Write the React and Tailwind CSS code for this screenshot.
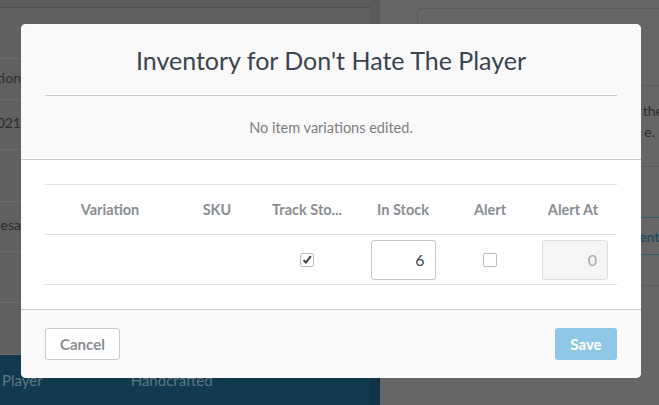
import { useState } from 'react';

const font = { fontFamily: 'Lato, "Open Sans", sans-serif' };

// columns of the inventory table
const cols = [
  { label: 'Variation', w: 'w-[130px]' },
  { label: 'SKU', w: 'w-[84px]' },
  { label: 'Track Sto...', w: 'w-[96px]' },
  { label: 'In Stock', w: 'w-[96px]' },
  { label: 'Alert', w: 'w-[78px]' },
  { label: 'Alert At', w: 'w-[88px]' },
];

const sideRows = [
  { text: 'Description', h: 'h-[41px]' },
  { text: 'SKU 80021', h: 'h-[50px]' },
  { text: '', h: 'h-[52px]' },
  { text: 'Mesa', h: 'h-[50px]' },
  { text: '', h: 'h-[51px]' },
  { text: '', h: 'h-[52px]' },
];

function Backdrop() {
  return (
    <div className="flex h-[405px] w-[659px] overflow-hidden">
      <div className="flex w-[370px] flex-col bg-[#606060]">
        <div className="h-[8px] border-b border-[#4e4e4e] bg-[#5c5c5c]" />
        <div className="h-[51px] border-b border-[#6a6a6a]" />
        {sideRows.map((r, i) => (
          <div key={i} className={`flex ${r.h} items-center border-b border-[#6a6a6a] pb-[4px]`}>
            <div className="flex w-[21px] justify-end overflow-hidden whitespace-nowrap text-[14px] text-[#2c2c2c]">{r.text}</div>
          </div>
        ))}
        <div className="flex flex-1 items-end gap-[88px] bg-[#113a4f] pb-[14px] pl-[2px] text-[15px] text-[#5e7582]">
          <span>Player</span>
          <span>Handcrafted</span>
        </div>
      </div>
      <div className="flex w-[10px] flex-col bg-[#5a5a5a]">
        <div className="flex-1" />
        <div className="h-[50px] bg-[#0f3447]" />
      </div>
      <div className="flex flex-1 flex-col bg-[#666666] pl-[37px]">
        <div className="mt-[8px] h-[38px] rounded-tl-[4px] border-l border-t border-[#5a5a5a]" />
        <div className="h-[40px] border-b border-[#5c5c5c]" />
        <div className="flex flex-col items-end pt-[14px] text-[14px] leading-[21px] text-[#2c2c2c]">
          <span className="-mr-[4px]">the</span>
          <span className="mr-[4px]">e.</span>
        </div>
        <div className="mt-[24px] border-t border-[#5c5c5c]" />
        <div className="mt-[50px] border-t border-[#2c5d78]" />
        <div className="flex h-[37px] items-center justify-end border-b border-[#2c5d78] text-[14px] font-bold text-[#1f4b63]">
          <span className="-mr-[8px]">ente</span>
        </div>
        <div className="mt-[30px] border-t border-[#5c5c5c]" />
        <div className="flex flex-1 items-center pb-[4px] text-[13px] font-bold tracking-[0.12em] text-[#2a2a2a]">
          ONLINE STORE SETTINGS
        </div>
      </div>
    </div>
  );
}

function Checkbox({ checked }) {
  return (
    <span className="flex h-[14px] w-[14px] items-center justify-center rounded-[2px] border border-[#b9bdc1] bg-white">
      {checked && (
        <svg viewBox="0 0 14 14" className="h-[14px] w-[14px]">
          <path d="M3 7.2l2.6 2.8L11.5 2.5" fill="none" stroke="#333a42" strokeWidth="2.2" />
        </svg>
      )}
    </span>
  );
}

export default function App() {
  const [stock, setStock] = useState('6');
  const [track, setTrack] = useState(true);

  return (
    <div className="relative h-[405px] w-[659px] overflow-hidden" style={font}>
      <Backdrop />
      <div className="absolute left-[21px] top-[24px] flex w-[620px] flex-col overflow-hidden rounded-[5px] bg-white">
        <div className="bg-[#f9f9f9] px-[24px]">
          <h1 className="flex h-[72px] items-center justify-center border-b border-[#c7cbcf] pt-[2px] text-[25px] text-[#3b4450]">
            Inventory for Don't Hate The Player
          </h1>
          <p className="flex h-[63px] items-center justify-center text-[14.5px] text-[#7b7f84]">
            No item variations edited.
          </p>
        </div>
        <div className="border-t border-[#c7cbcf] px-[24px] pb-[24px] pt-[24px]">
          <div className="flex h-[51px] items-center border-b border-t border-[#dfe1e3] text-[14.5px] font-bold text-[#898d92]">
            {cols.map((c) => (
              <div key={c.label} className={`${c.w} whitespace-nowrap text-center`}>{c.label}</div>
            ))}
          </div>
          <div className="flex h-[50px] items-center border-b border-[#dfe1e3]">
            <div className="w-[130px]" />
            <div className="w-[84px]" />
            <div className="flex w-[96px] justify-center" onClick={() => setTrack(!track)}>
              <Checkbox checked={track} />
            </div>
            <div className="flex w-[96px] justify-center">
              <input
                value={stock}
                onChange={(e) => setStock(e.target.value)}
                className="h-[40px] w-[65px] rounded-[3px] border border-[#c1c5c9] bg-white px-[10px] text-right text-[16px] text-[#3b4450] outline-none"
              />
            </div>
            <div className="flex w-[78px] justify-center">
              <Checkbox checked={false} />
            </div>
            <div className="flex w-[88px] justify-center">
              <input
                value="0"
                disabled
                className="ml-[4px] h-[40px] w-[66px] rounded-[3px] border border-[#dcdfe2] bg-[#f5f5f5] px-[10px] text-right text-[16px] text-[#a7abaf]"
              />
            </div>
          </div>
        </div>
        <div className="flex h-[69px] items-center justify-between border-t border-[#c7cbcf] bg-[#fafafa] px-[24px]">
          <button className="h-[32px] w-[75px] rounded-[3px] border border-[#c7cbcf] bg-white text-[15px] font-bold text-[#8a8e93]">
            Cancel
          </button>
          <button className="h-[32px] w-[62px] rounded-[3px] bg-[#8fc8e6] text-[15px] font-bold text-white">
            Save
          </button>
        </div>
      </div>
    </div>
  );
}
